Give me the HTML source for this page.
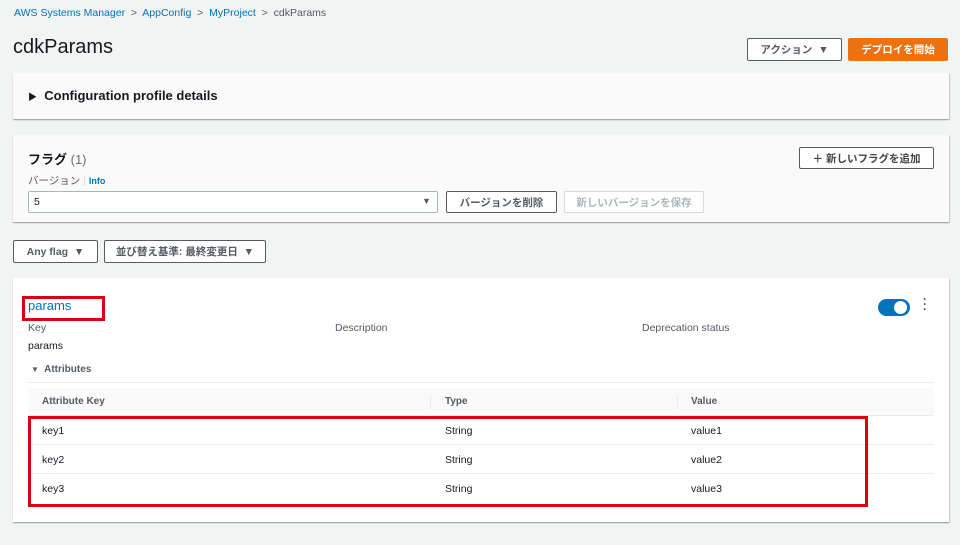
<!DOCTYPE html>
<html><head><meta charset="utf-8"><style>
*{box-sizing:border-box;margin:0;padding:0}
body{width:960px;height:545px;background:#f2f3f3;font-family:"Liberation Sans","Noto Sans CJK JP",sans-serif;color:#16191f;position:relative;overflow:hidden;font-size:11px}
.a{position:absolute;white-space:nowrap}
.btn{position:absolute;border:1px solid #545b64;background:#fff;font-weight:bold;font-size:10.5px;color:#545b64;display:flex;align-items:center;justify-content:center;border-radius:2px}
.panel{position:absolute;left:13px;width:936px;box-shadow:0 1px 1px rgba(0,28,36,.3),1px 1px 1px rgba(0,28,36,.15)}
.link{color:#0073bb}
.hl{position:absolute;border:3px solid #d9000f}
.row{position:absolute;left:28px;width:906px;height:29px;border-bottom:1px solid #eaeded}
.g{color:#545b64}
</style></head><body>
<div class="a" style="left:14px;top:7px;font-size:10.5px"><span class="link">AWS Systems Manager</span> <span class="g">&nbsp;&gt;&nbsp;</span> <span class="link">AppConfig</span> <span class="g">&nbsp;&gt;&nbsp;</span> <span class="link">MyProject</span> <span class="g">&nbsp;&gt;&nbsp;</span> <span class="g">cdkParams</span></div>
<div class="a" style="left:13px;top:36px;font-size:20px">cdkParams</div>
<div class="btn" style="left:747px;top:38px;width:95px;height:23px">アクション&nbsp;&nbsp;▼</div>
<div class="btn" style="left:848px;top:38px;width:100px;height:23px;background:#ec7211;border-color:#ec7211;color:#fff">デプロイを開始</div>

<div class="panel" style="top:73px;height:46px;background:#fafafa"></div>
<div class="a" style="left:28px;top:88px;font-size:13px;font-weight:bold"><span style="font-size:9px">▶</span>&nbsp;&nbsp;Configuration profile details</div>

<div class="panel" style="top:135px;height:87px;background:#fafafa"></div>
<div class="a" style="left:28px;top:149px;font-size:13px;font-weight:bold">フラグ <span style="font-weight:normal;color:#687078">(1)</span></div>
<div class="btn" style="left:799px;top:147px;width:135px;height:22px;color:#444">＋ 新しいフラグを追加</div>
<div class="a g" style="left:28px;top:173px;font-size:10.5px">バージョン <span style="color:#d5dbdb">|</span> <span class="link" style="font-weight:bold;font-size:9px">Info</span></div>
<div style="position:absolute;left:28px;top:191px;width:410px;height:22px;border:1px solid #aab7b8;background:#fff;border-radius:2px"></div>
<div class="a" style="left:34px;top:196px;font-size:10.5px">5</div>
<div class="a g" style="left:422px;top:196px;font-size:9px">▼</div>
<div class="btn" style="left:446px;top:191px;width:111px;height:22px">バージョンを削除</div>
<div class="btn" style="left:564px;top:191px;width:140px;height:22px;border-color:#d5dbdb;color:#aab7b8">新しいバージョンを保存</div>

<div class="btn" style="left:13px;top:240px;width:85px;height:23px">Any flag&nbsp;&nbsp;▼</div>
<div class="btn" style="left:104px;top:240px;width:162px;height:23px">並び替え基準: 最終変更日&nbsp;&nbsp;▼</div>

<div class="panel" style="top:278px;height:244px;background:#fff"></div>
<div class="a link" style="left:28px;top:298px;font-size:13px">params</div>
<div class="hl" style="left:22px;top:296px;width:83px;height:25px"></div>
<div style="position:absolute;left:878px;top:299px;width:32px;height:17px;border-radius:9px;background:#0073bb"></div>
<div style="position:absolute;left:894px;top:301px;width:13px;height:13px;border-radius:50%;background:#fff"></div>
<div class="a g" style="left:923px;top:297px;font-size:12px;font-weight:bold;line-height:5px">·<br>·<br>·</div>
<div class="a g" style="left:28px;top:322px;font-size:10.5px">Key</div>
<div class="a g" style="left:335px;top:322px;font-size:10.5px">Description</div>
<div class="a g" style="left:642px;top:322px;font-size:10.5px">Deprecation status</div>
<div class="a" style="left:28px;top:340px;font-size:10.5px">params</div>
<div class="a" style="left:31px;top:364px;font-size:10px;font-weight:bold;color:#545b64"><span style="font-size:8px">▼</span>&nbsp; Attributes</div>
<div style="position:absolute;left:28px;top:382px;width:906px;height:1px;background:#eaeded"></div>
<div style="position:absolute;left:28px;top:388px;width:906px;height:28px;background:#fafafa;border-bottom:1px solid #eaeded"></div>
<div style="position:absolute;left:430px;top:395px;width:1px;height:14px;background:#eaeded"></div>
<div style="position:absolute;left:677px;top:395px;width:1px;height:14px;background:#eaeded"></div>
<div class="a" style="left:42px;top:396px;font-size:10px;font-weight:bold;color:#545b64">Attribute Key</div>
<div class="a" style="left:445px;top:396px;font-size:10px;font-weight:bold;color:#545b64">Type</div>
<div class="a" style="left:691px;top:396px;font-size:10px;font-weight:bold;color:#545b64">Value</div>
<div class="row" style="top:416px"></div><div class="row" style="top:445px"></div><div class="row" style="top:474px;border:none"></div>
<div class="a" style="left:42px;top:425px;font-size:10.5px">key1</div><div class="a" style="left:445px;top:425px;font-size:10.5px">String</div><div class="a" style="left:691px;top:425px;font-size:10.5px">value1</div>
<div class="a" style="left:42px;top:454px;font-size:10.5px">key2</div><div class="a" style="left:445px;top:454px;font-size:10.5px">String</div><div class="a" style="left:691px;top:454px;font-size:10.5px">value2</div>
<div class="a" style="left:42px;top:483px;font-size:10.5px">key3</div><div class="a" style="left:445px;top:483px;font-size:10.5px">String</div><div class="a" style="left:691px;top:483px;font-size:10.5px">value3</div>
<div class="hl" style="left:28px;top:416px;width:840px;height:91px"></div>
</body></html>
